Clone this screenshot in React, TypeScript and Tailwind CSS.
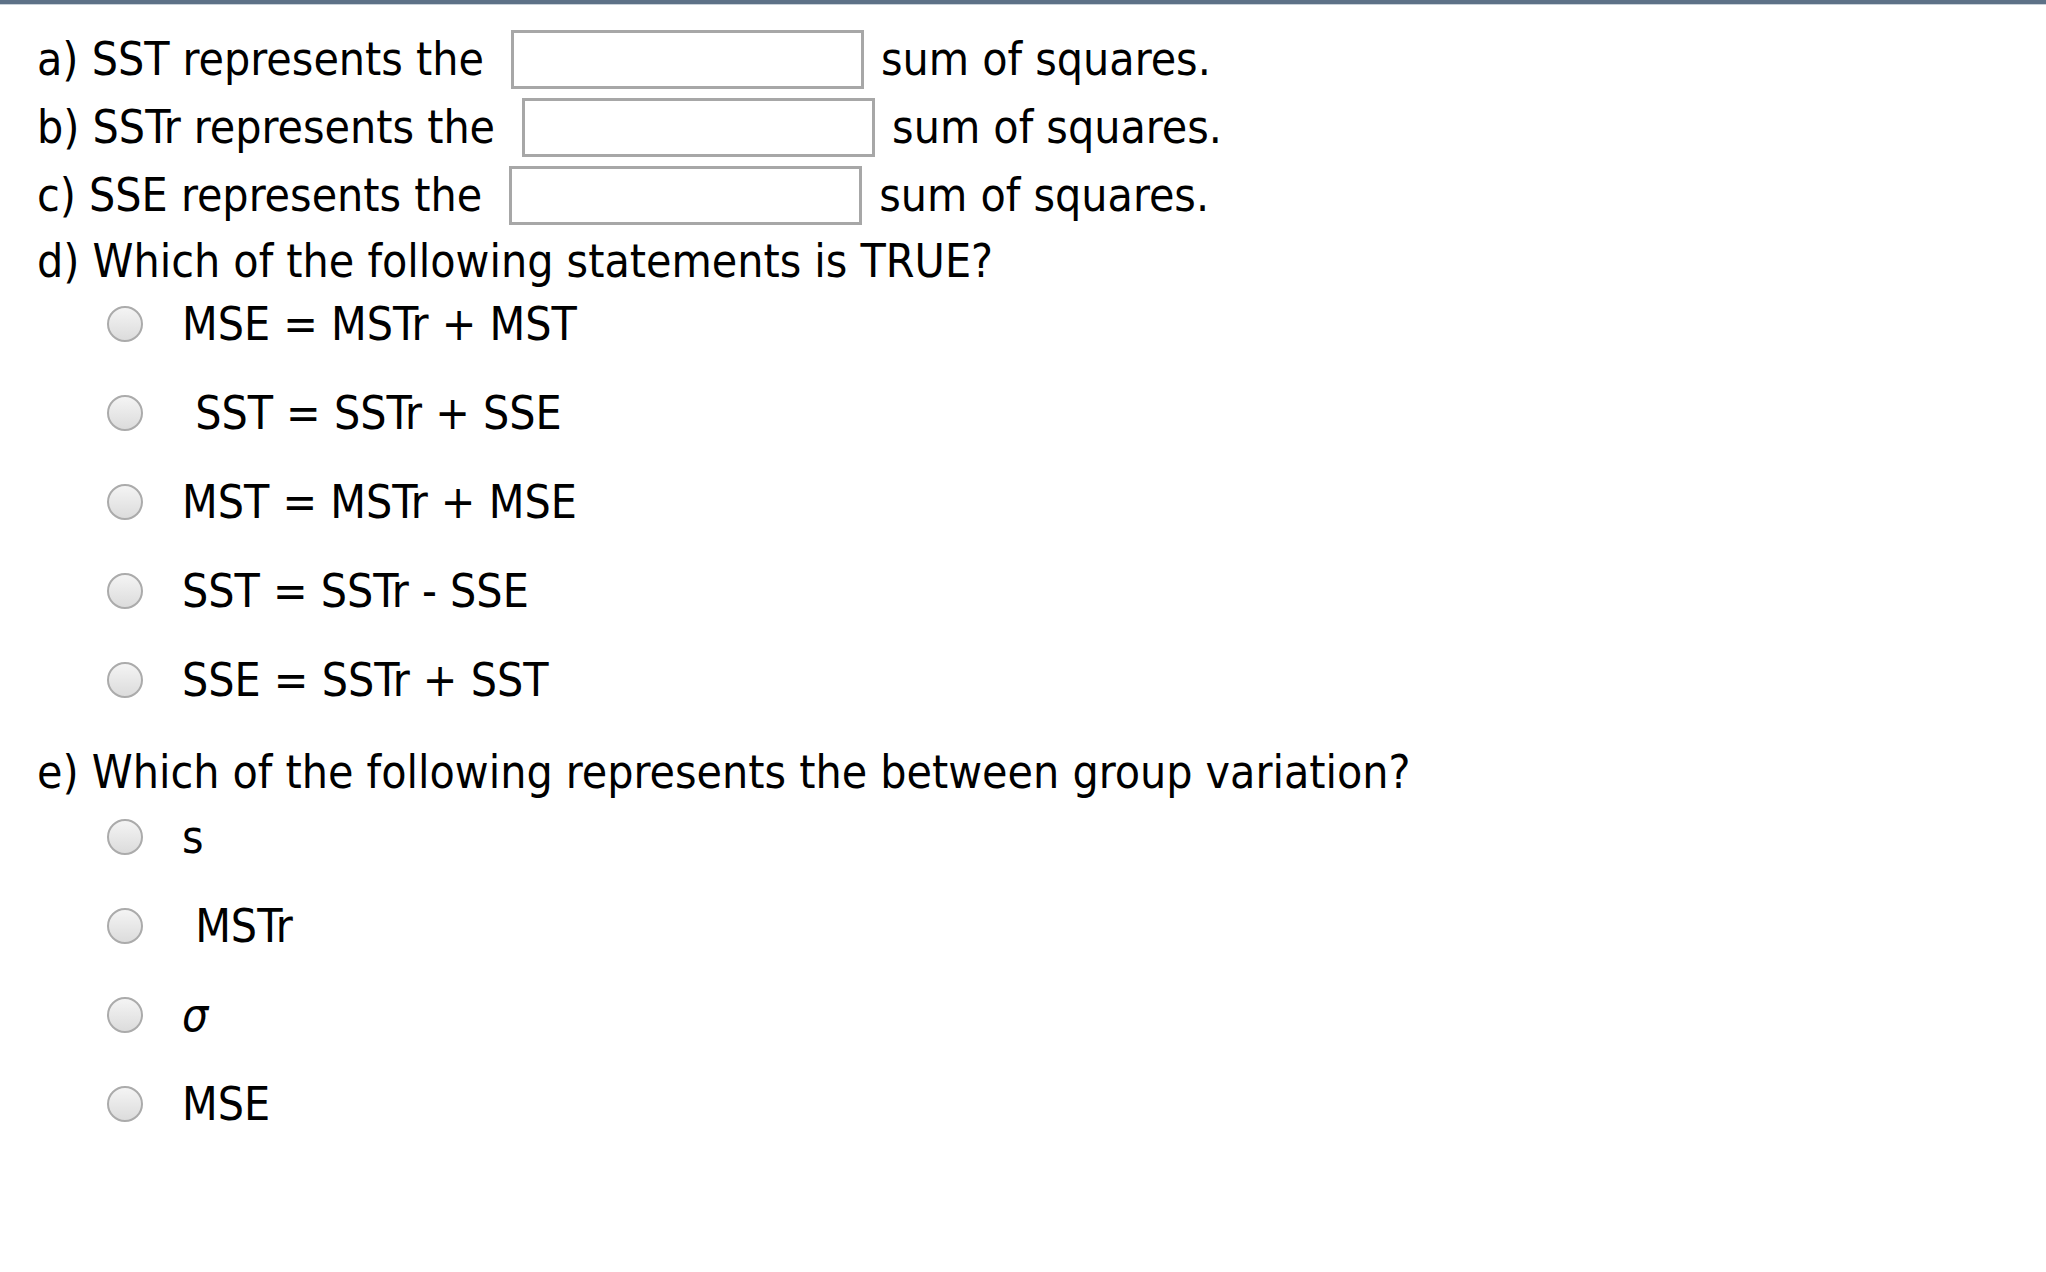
import React from "react";

function Box() {
  return <div className="ml-[27px] h-[59px] w-[353px] shrink-0 border-[3px] border-[#a7a7a7] bg-white" />;
}

function Radio({ label }: { label: React.ReactNode }) {
  return (
    <div className="flex h-[45px] items-center">
      <div className="ml-[70px] h-[36px] w-[36px] shrink-0 rounded-full border-[2px] border-[#ababab] bg-gradient-to-b from-[#f4f4f4] to-[#dcdcdc]" />
      <span className="ml-[39px] whitespace-pre">{label}</span>
    </div>
  );
}

export default function App() {
  const rows = [
    { pre: "a) SST represents the" },
    { pre: "b) SSTr represents the" },
    { pre: "c) SSE represents the" },
  ];
  const d = ["MSE = MSTr + MST", " SST = SSTr + SSE", "MST = MSTr + MSE", "SST = SSTr - SSE", "SSE = SSTr + SST"];
  return (
    <div className="min-h-[1272px] w-[2046px] bg-white text-[46px] leading-none text-black font-['DejaVu_Sans_Condensed','DejaVu_Sans',sans-serif] [font-stretch:condensed]">
      <div className="h-[5px] border-b border-[#c9d1d9] bg-[#5d7187]" />
      <div className="pl-[37px] pt-[20px]">
        {rows.map((r) => (
          <div key={r.pre} className="flex h-[68px] items-center">
            <span className="whitespace-pre">{r.pre}</span>
            <Box />
            <span className="ml-[17px]">sum of squares.</span>
          </div>
        ))}
        <div className="flex h-[64px] items-center">d) Which of the following statements is TRUE?</div>
        <div className="mt-[8px] flex flex-col gap-[44px]">
          {d.map((t) => (
            <Radio key={t} label={t} />
          ))}
        </div>
        <div className="mt-[38px] flex h-[64px] items-center">
          e) Which of the following represents the between group variation?
        </div>
        <div className="mt-[10px] flex flex-col gap-[44px]">
          <Radio label="s" />
          <Radio label=" MSTr" />
          <Radio label={<i>σ</i>} />
          <Radio label="MSE" />
        </div>
      </div>
    </div>
  );
}
